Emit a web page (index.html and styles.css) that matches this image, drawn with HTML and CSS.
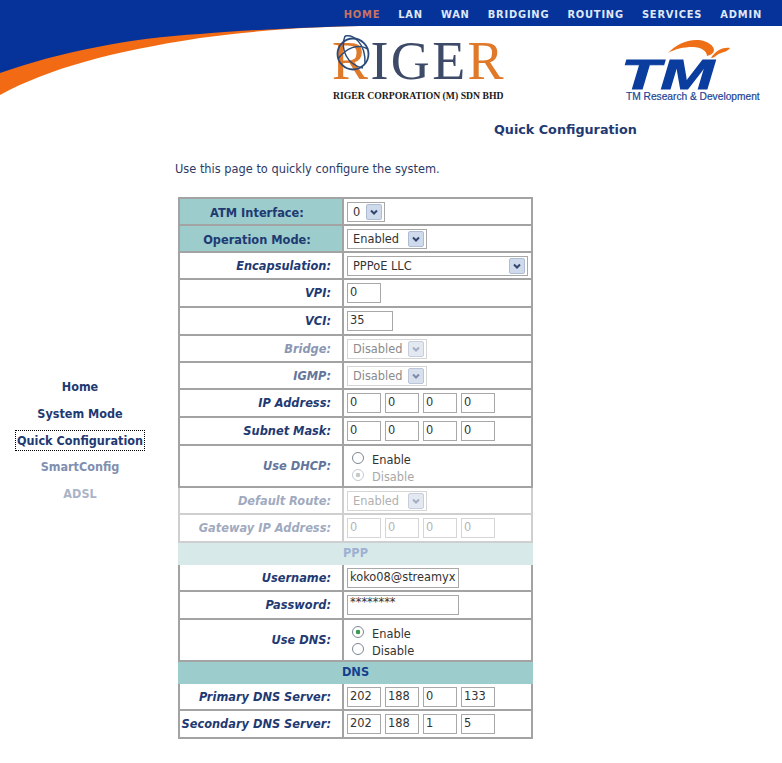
FILE: index.html
```html
<!DOCTYPE html>
<html lang="en">
<head>
<meta charset="utf-8">
<title>Quick Configuration</title>
<link rel="stylesheet" href="styles.css">
</head>
<body>
<header class="header">
  <svg class="swoosh" viewBox="0 0 782 108" width="782" height="108" aria-hidden="true">
    <path d="M0 95C50 68 110 52 200 38C260 30 310 27 360 26L782 26V0H0Z" fill="#f26a13"/>
    <path d="M0 73C60 52 130 38 200 34C260 29 320 27 360 26L782 26V0H0Z" fill="#063399"/>
  </svg>
  <nav class="topnav">
    <a class="topnav-item is-active">HOME</a>
    <a class="topnav-item">LAN</a>
    <a class="topnav-item">WAN</a>
    <a class="topnav-item">BRIDGING</a>
    <a class="topnav-item">ROUTING</a>
    <a class="topnav-item">SERVICES</a>
    <a class="topnav-item">ADMIN</a>
  </nav>
  <div class="brands">
    <div class="riger">
      <div class="riger-word"><span class="orange">R</span><span class="slate">IGE</span><span class="orange">R</span></div>
      <svg class="riger-globe" viewBox="0 0 40 48" width="40" height="48" aria-hidden="true">
        <circle cx="20" cy="23" r="15.5" fill="none" stroke="#2c4a78" stroke-width="1.8"/>
        <path d="M12 5C7 18 14 34 30 37M5 28C13 17 25 12 35 18M12 5C20 3 33 12 32 33" fill="none" stroke="#2c4a78" stroke-width="1.5"/>
      </svg>
      <div class="riger-sub">RIGER CORPORATION (M) SDN BHD</div>
    </div>
    <div class="tm">
      <svg class="tm-swoosh" viewBox="0 0 110 30" width="110" height="30" aria-hidden="true">
        <path d="M43 15C50 7 62 1 74 2C83 3 89 8 89 12C89 15 86 17 82 18C82 13 76 9 68 9C58 9 50 11 43 15Z" fill="#ee6f16"/>
        <path d="M86 20C90 14 96 9 105 10C103 14 96 14 92 17C90 19 88 20 86 20Z" fill="#ee6f16"/>
      </svg>
      <div class="tm-word">TM</div>
      <div class="tm-sub">TM Research &amp; Development</div>
    </div>
  </div>
</header>

<div class="page">
  <aside class="sidebar">
    <a class="side-item">Home</a>
    <a class="side-item">System Mode</a>
    <a class="side-item is-current">Quick Configuration</a>
    <a class="side-item is-muted">SmartConfig</a>
    <a class="side-item is-faint">ADSL</a>
  </aside>
  <main class="content">
    <h1 class="title">Quick Configuration</h1>
    <p class="intro">Use this page to quickly configure the system.</p>
    <table class="form">
      <tr class="h27">
        <th class="label teal">ATM Interface:</th>
        <td><span class="sel w-atm"><select><option>0</option></select><svg class="arrow" viewBox="0 0 16 16"><rect x=".5" y=".5" width="15" height="15" rx="1.5" fill="#cfdaec" stroke="#aebcd4"/><path d="M5 6.5L8 9.5L11 6.5" fill="none" stroke="#33466e" stroke-width="2"/></svg></span></td>
      </tr>
      <tr class="h27">
        <th class="label teal">Operation Mode:</th>
        <td><span class="sel w-mid"><select><option>Enabled</option></select><svg class="arrow" viewBox="0 0 16 16"><rect x=".5" y=".5" width="15" height="15" rx="1.5" fill="#cfdaec" stroke="#aebcd4"/><path d="M5 6.5L8 9.5L11 6.5" fill="none" stroke="#33466e" stroke-width="2"/></svg></span></td>
      </tr>
      <tr class="h27">
        <th class="label">Encapsulation:</th>
        <td><span class="sel w-full"><select><option>PPPoE LLC</option></select><svg class="arrow" viewBox="0 0 16 16"><rect x=".5" y=".5" width="15" height="15" rx="1.5" fill="#cfdaec" stroke="#aebcd4"/><path d="M5 6.5L8 9.5L11 6.5" fill="none" stroke="#33466e" stroke-width="2"/></svg></span></td>
      </tr>
      <tr class="h28">
        <th class="label">VPI:</th>
        <td><input class="field w-ip" value="0"></td>
      </tr>
      <tr class="h28">
        <th class="label">VCI:</th>
        <td><input class="field w-vci" value="35"></td>
      </tr>
      <tr class="h27 faded">
        <th class="label">Bridge:</th>
        <td><span class="sel w-mid off-sel"><select disabled><option>Disabled</option></select><svg class="arrow" viewBox="0 0 16 16"><rect x=".5" y=".5" width="15" height="15" rx="1.5" fill="#e3e8f1" stroke="#c6cedd"/><path d="M5 6.5L8 9.5L11 6.5" fill="none" stroke="#a3aec4" stroke-width="2"/></svg></span></td>
      </tr>
      <tr class="h27 off-mid">
        <th class="label">IGMP:</th>
        <td><span class="sel w-mid off-sel"><select disabled><option>Disabled</option></select><svg class="arrow" viewBox="0 0 16 16"><rect x=".5" y=".5" width="15" height="15" rx="1.5" fill="#d8e0ee" stroke="#bcc6d8"/><path d="M5 6.5L8 9.5L11 6.5" fill="none" stroke="#7c8bab" stroke-width="2"/></svg></span></td>
      </tr>
      <tr class="h28">
        <th class="label">IP Address:</th>
        <td><div class="ip"><input class="field w-ip" value="0"><input class="field w-ip" value="0"><input class="field w-ip" value="0"><input class="field w-ip" value="0"></div></td>
      </tr>
      <tr class="h28">
        <th class="label">Subnet Mask:</th>
        <td><div class="ip"><input class="field w-ip" value="0"><input class="field w-ip" value="0"><input class="field w-ip" value="0"><input class="field w-ip" value="0"></div></td>
      </tr>
      <tr class="h42 off-mid">
        <th class="label">Use DHCP:</th>
        <td>
          <div class="radios">
            <label class="radio"><input type="radio" name="dhcp">Enable</label>
            <label class="radio is-off"><input type="radio" name="dhcp" checked disabled>Disable</label>
          </div>
        </td>
      </tr>
      <tr class="h27 off">
        <th class="label">Default Route:</th>
        <td><span class="sel w-mid off-sel"><select disabled><option>Enabled</option></select><svg class="arrow" viewBox="0 0 16 16"><rect x=".5" y=".5" width="15" height="15" rx="1.5" fill="#e3e8f1" stroke="#c6cedd"/><path d="M5 6.5L8 9.5L11 6.5" fill="none" stroke="#a3aec4" stroke-width="2"/></svg></span></td>
      </tr>
      <tr class="h28 off">
        <th class="label">Gateway IP Address:</th>
        <td><div class="ip"><input class="field w-ip" value="0" disabled><input class="field w-ip" value="0" disabled><input class="field w-ip" value="0" disabled><input class="field w-ip" value="0" disabled></div></td>
      </tr>
      <tr class="h22">
        <th class="band band-off" colspan="2">PPP</th>
      </tr>
      <tr class="h27">
        <th class="label">Username:</th>
        <td><input class="field w-user" value="koko08@streamyx"></td>
      </tr>
      <tr class="h28">
        <th class="label">Password:</th>
        <td><input class="field w-user pw" value="********"></td>
      </tr>
      <tr class="h42">
        <th class="label">Use DNS:</th>
        <td>
          <div class="radios">
            <label class="radio"><input type="radio" name="dns" checked>Enable</label>
            <label class="radio"><input type="radio" name="dns">Disable</label>
          </div>
        </td>
      </tr>
      <tr class="h22">
        <th class="band" colspan="2">DNS</th>
      </tr>
      <tr class="h27">
        <th class="label">Primary DNS Server:</th>
        <td><div class="ip"><input class="field w-ip" value="202"><input class="field w-ip" value="188"><input class="field w-ip" value="0"><input class="field w-ip" value="133"></div></td>
      </tr>
      <tr class="h28">
        <th class="label">Secondary DNS Server:</th>
        <td><div class="ip"><input class="field w-ip" value="202"><input class="field w-ip" value="188"><input class="field w-ip" value="1"><input class="field w-ip" value="5"></div></td>
      </tr>
    </table>
  </main>
</div>
</body>
</html>
```
FILE: styles.css
```css
* { box-sizing: border-box; }
html, body { margin: 0; padding: 0; background: #fff; }
body {
  width: 782px;
  height: 763px;
  overflow: hidden;
  font-family: "DejaVu Sans", sans-serif;
  font-size: 11.4px;
  color: #2a3a66;
}

/* header */
.header { position: relative; height: 108px; }
.swoosh { position: absolute; left: 0; top: 0; }
.topnav {
  position: relative;
  display: flex;
  justify-content: flex-end;
  gap: 18px;
  height: 26px;
  padding: 8px 20px 0 0;
  font-family: "DejaVu Sans Condensed", "DejaVu Sans", sans-serif;
  font-size: 11px;
  font-weight: 700;
  line-height: 13px;
  letter-spacing: .8px;
  color: #dfe8f7;
}
.topnav-item.is-active { color: #c8735f; }

.brands { position: relative; display: flex; padding-left: 333px; }
.riger { position: relative; width: 172px; height: 74px; flex: none; }
.riger-word {
  font-family: "Liberation Serif", serif;
  font-size: 54px;
  line-height: 52px;
  letter-spacing: 2.4px;
  height: 63px;
  margin-left: -1px;
  padding-top: 9px;
  white-space: nowrap;
}
.orange { color: #e07a2a; }
.slate { color: #3d4a68; }
.riger-globe { position: absolute; left: 0; top: 5px; }
.riger-sub {
  font-family: "Liberation Serif", serif;
  font-weight: 700;
  font-size: 9.7px;
  line-height: 11px;
  padding-top: 1px;
  color: #1a1a1a;
  white-space: nowrap;
}
.tm { position: relative; margin-left: 120px; width: 140px; height: 74px; flex: none; }
.tm-swoosh { position: absolute; left: 0; top: 12px; }
.tm-word {
  position: absolute;
  left: -4px;
  top: 33px;
  font-family: "Liberation Sans", sans-serif;
  font-weight: 700;
  font-style: italic;
  font-size: 43px;
  line-height: 30px;
  color: #0a3d9e;
  -webkit-text-stroke: 1px #0a3d9e;
  transform: scaleX(1.5);
  transform-origin: left center;
}
.tm-sub {
  position: absolute;
  left: 1px;
  top: 65px;
  font-family: "Liberation Sans", sans-serif;
  font-size: 10.2px;
  line-height: 12px;
  color: #1b4594;
  -webkit-text-stroke: .2px #1b4594;
  white-space: nowrap;
}

/* page */
.page { display: flex; }
.sidebar {
  flex: none;
  width: 160px;
  padding-top: 270px;
  display: flex;
  flex-direction: column;
  align-items: center;
  gap: 9.75px;
  font-family: "DejaVu Sans Condensed", "DejaVu Sans", sans-serif;
  font-size: 12.5px;
  font-weight: 700;
  line-height: 15px;
  color: #1f3a72;
}
.side-item { padding: 1px; border: 1px solid transparent; margin: -2px 0; line-height: 17px; }
.side-item.is-current { border: 1px dotted #000; }
.side-item.is-muted { color: #7f8fb0; }
.side-item.is-faint { color: #aab4c8; }

.content { flex: none; width: 622px; padding-left: 15px; }
.title {
  margin: 14px 0 0;
  padding-left: 319px;
  font-size: 12.75px;
  line-height: 16px;
  font-weight: 700;
  color: #1f3a72;
  white-space: nowrap;
}
.intro { margin: 24px 0 0; line-height: 14px; font-size: 11.4px; color: #2c3a66; }

/* table */
.form {
  margin: 21px 0 0 3px;
  width: 355px;
  table-layout: fixed;
  border-collapse: collapse;
}
.form td, .form th { border: 2px solid #a3a3a3; padding: 0; }
.form td { padding-left: 3px; }
.h22 { height: 22px; }
.h27 { height: 27px; }
.h28 { height: 28px; }
.h42 { height: 42px; }
.label {
  width: 164px;
  text-align: right;
  padding-right: 11px !important;
  font-style: italic;
  font-weight: 700;
  font-size: 11.4px;
  color: #1f3a72;
  white-space: nowrap;
}
.label.teal { background: #9ccccc; text-align: center; font-style: normal; padding-right: 8px !important; padding-top: 2px !important; }
.band {
  background: #9ccccc;
  text-align: center;
  font-size: 11.4px;
  color: #15408c;
  font-weight: 700;
  border-color: #9ccccc !important;
}
.band-off { background: #d8e9e9; color: #9db1d2; border-color: #d8e9e9 !important; }

.form .off td, .form .off th { border-color: #cfcfcf; }
.off .label { color: #a0aabf; }
.off-mid .label { color: #63759c; }
.faded .label { color: #8a97b3; }

/* controls */
.field {
  display: block;
  height: 20px;
  padding: 0 0 2px 2px;
  border: 1px solid #a8a8a8;
  background: #fff;
  font-family: "DejaVu Sans", sans-serif;
  font-size: 11.4px;
  color: #333;
  border-radius: 0;
}
.field:disabled { border-color: #d5d5d5; color: #b5b5b5; }
.pw { padding-bottom: 6px; }
.w-ip { width: 34px; }
.w-vci { width: 46px; }
.w-user { width: 112px; }
.ip { display: flex; gap: 4px; }

.sel {
  display: flex;
  align-items: center;
  height: 20px;
  padding-right: 2px;
  border: 1px solid #a8a8a8;
  background: #fff;
}
.sel select {
  appearance: none;
  flex: 1;
  min-width: 0;
  height: 18px;
  padding: 0 0 0 5px;
  border: 0;
  background: transparent;
  font-family: "DejaVu Sans", sans-serif;
  font-size: 11.4px;
  color: #333;
  opacity: 1;
}
.arrow { width: 16px; height: 16px; flex: none; }
.w-atm { width: 38px; }
.w-mid { width: 80px; }
.w-full { width: 181px; }
.off-sel { border-color: #d5d5d5; }
.off-sel select { color: #8b8b8b; }
.off .off-sel select { color: #b0b0b0; }

.radios { display: flex; flex-direction: column; padding: 4px 0 0 5px; }
.radio {
  display: flex;
  align-items: center;
  height: 17px;
  font-size: 11.4px;
  color: #333;
}
.radio input {
  appearance: none;
  width: 12px;
  height: 12px;
  margin: 0 8px 3px 0;
  border: 1.5px solid #7d8794;
  border-radius: 50%;
  background: #fff;
}
.radio input:checked { background: radial-gradient(circle, #3c9a50 0 2px, #fff 2.6px); }
.radio input:disabled { border-color: #c4cad2; }
.radio input:disabled:checked { background: radial-gradient(circle, #c3cbc6 0 2px, #fff 2.6px); }
.radio.is-off { color: #a8a8a8; }
```
